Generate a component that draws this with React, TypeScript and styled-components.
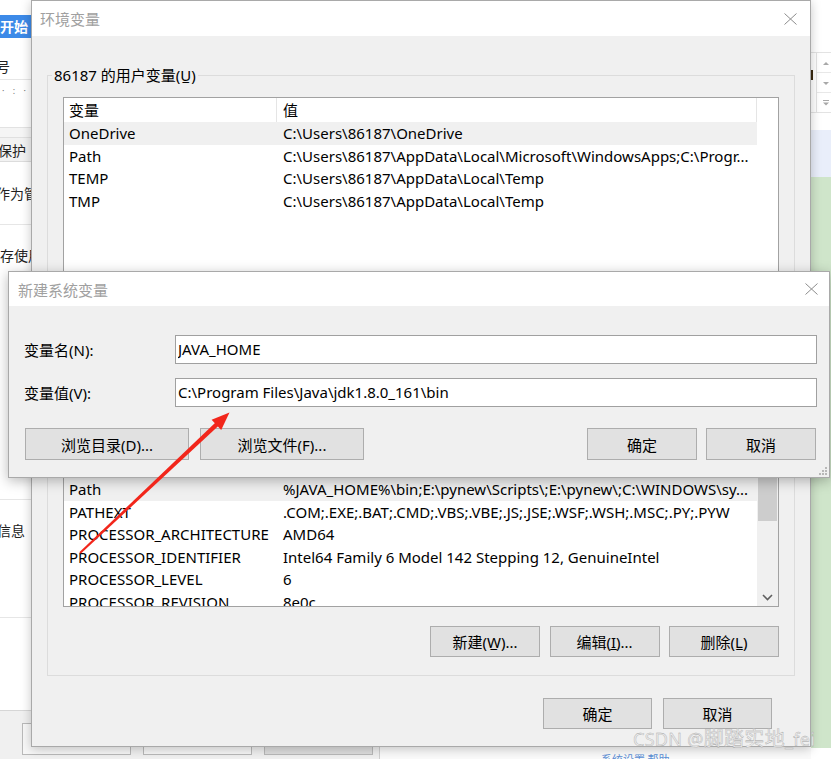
import React from "react";
import styled, { createGlobalStyle } from "styled-components";

const GlobalStyle = createGlobalStyle`
  html, body { margin: 0; padding: 0; background: #fff; }
  body {
    font-family: "Noto Sans", "Noto Sans CJK SC", sans-serif;
    font-size: 15px;
    color: #000;
    overflow: hidden;
  }
  * { box-sizing: border-box; }
`;

const Desktop = styled.div`
  position: relative;
  width: 831px;
  height: 759px;
  overflow: hidden;
  background: #fff;
`;

const Window = styled.div<{ $x: number; $y: number; $w: number; $h: number }>`
  position: absolute;
  left: ${(p) => p.$x}px;
  top: ${(p) => p.$y}px;
  width: ${(p) => p.$w}px;
  height: ${(p) => p.$h}px;
`;

/* ---------- background window on the left ---------- */
const SideWindow = styled(Window)`
  background: #fff;
  overflow: hidden;
  display: flex;
  flex-direction: column;
  font-size: 14px;
  color: #222;
`;

const SideBlock = styled.div<{ $h: number; $line?: boolean; $center?: boolean }>`
  height: ${(p) => p.$h}px;
  flex: none;
  display: flex;
  align-items: ${(p) => (p.$center ? "center" : "flex-start")};
  border-bottom: ${(p) => (p.$line ? "1px solid #e6e6e6" : "none")};
`;

const StartButton = styled.div`
  margin-top: 15px;
  margin-left: -20px;
  width: 70px;
  height: 23px;
  padding-left: 20px;
  background: #3c8ae8;
  color: #fff;
  font-weight: 700;
  font-size: 14px;
  line-height: 23px;
  font-family: "Noto Sans CJK SC", sans-serif;
`;

const SideText = styled.span<{ $shift: number }>`
  margin-left: ${(p) => p.$shift}px;
  white-space: nowrap;
  font-family: "Noto Sans CJK SC", sans-serif;
`;

const TinyMarks = styled.span`
  margin: 6px 0 0 2px;
  font-size: 9px;
  letter-spacing: 3px;
  color: #777;
  line-height: 10px;
`;

const GrayBand = styled.div`
  height: 35px;
  flex: none;
  display: flex;
  flex-direction: column;
  background: #f2f2f2;
  border-top: 1px solid #e2e2e2;
  border-bottom: 1px solid #dcdcdc;
`;

const BandTop = styled.div`
  height: 10px;
  border-bottom: 1px solid #e0e0e0;
  background: #f5f5f5;
`;

const BandRow = styled.div`
  flex: 1;
  display: flex;
  align-items: center;
`;

const SideFooter = styled.div`
  flex: 1;
  background: #f0f0f0;
  border-top: 1px solid #d6d6d6;
  display: flex;
  gap: 12px;
  padding: 12px 0 0 22px;
`;

const SideButton = styled.div<{ $filled?: boolean }>`
  width: 109px;
  height: 32px;
  border: 1px solid #b9b9b9;
  background: ${(p) => (p.$filled ? "#dedede" : "#f7f7f7")};
`;

/* ---------- background window on the right ---------- */
const RightWindow = styled(Window)`
  background: #fff;
  display: flex;
  flex-direction: column;
  overflow: hidden;
`;

const RBlock = styled.div<{ $h: number; $bg: string }>`
  height: ${(p) => p.$h}px;
  flex: none;
  background: ${(p) => p.$bg};
`;

const RToolbar = styled.div`
  height: 61px;
  flex: none;
  display: flex;
  border-top: 1px solid #e3e3e3;
  border-bottom: 1px solid #e3e3e3;
`;

const RLeft = styled.div`
  width: 6px;
  border-right: 1px solid #e3e3e3;
  padding-top: 17px;
`;

const RMark = styled.div`
  width: 2px;
  height: 10px;
  background: #3a2a10;
`;

const RArrows = styled.div`
  flex: 1;
  display: flex;
  flex-direction: column;
`;

const RArrowCell = styled.div`
  flex: 1;
  display: flex;
  align-items: center;
  padding-left: 5px;
  border-bottom: 1px solid #e8e8e8;
  &:last-child { border-bottom: none; }
`;

const RGreen = styled.div`
  flex: 1;
  background: #cfe5ca;
`;

const BottomWindow = styled(Window)`
  background: #fafafa;
  border-left: 1px solid #cfcfcf;
  overflow: hidden;
  padding: 5px 0 0 221px;
  font-size: 11px;
  color: #5b8fd6;
  line-height: 14px;
  white-space: nowrap;
  font-family: "Noto Sans CJK SC", sans-serif;
`;

/* ---------- dialogs ---------- */
const Dialog = styled(Window)`
  background: #f0f0f0;
  border: 1px solid #a9a9a9;
  display: flex;
  flex-direction: column;
`;

const MainDialog = styled(Dialog)`
  box-shadow: 0 2px 10px rgba(0, 0, 0, 0.22);
`;

const ChildDialog = styled(Dialog)`
  box-shadow: 0 3px 12px rgba(0, 0, 0, 0.28);
`;

const TitleBar = styled.div<{ $h: number; $pad: number; $closeGap: number }>`
  height: ${(p) => p.$h}px;
  flex: none;
  background: #fff;
  display: flex;
  align-items: center;
  justify-content: space-between;
  padding-left: ${(p) => p.$pad}px;
  padding-right: ${(p) => p.$closeGap}px;
`;

const TitleText = styled.span`
  font-size: 15px;
  color: #a0a0a0;
  font-family: "Noto Sans CJK SC", sans-serif;
`;

const MainBody = styled.div`
  flex: 1;
  display: flex;
  flex-direction: column;
  padding: 29px 15px 17px 15px;
`;

const GroupBox = styled.fieldset<{ $gapTop?: number; $padTop: number }>`
  margin: ${(p) => p.$gapTop ?? 0}px 0 0 0;
  padding: ${(p) => p.$padTop}px 0 18px 0;
  border: 1px solid #dcdcdc;
  min-width: 0;
`;

const GroupLegend = styled.legend`
  margin-left: 4px;
  padding: 0 2px;
  line-height: 20px;
  font-size: 15px;
`;

const GroupInner = styled.div`
  padding: 0 15px;
  display: flex;
  flex-direction: column;
`;

const ListView = styled.div<{ $h: number }>`
  height: ${(p) => p.$h}px;
  border: 1px solid #a2a2a2;
  background: #fff;
  display: flex;
  overflow: hidden;
`;

const ListMain = styled.div`
  width: 693px;
  flex: none;
  display: flex;
  flex-direction: column;
  overflow: hidden;
`;

const HeaderRow = styled.div`
  height: 24px;
  flex: none;
  display: grid;
  grid-template-columns: 213px 480px;
`;

const HeaderCell = styled.div<{ $pad: number }>`
  border-right: 1px solid #e5e5e5;
  padding-left: ${(p) => p.$pad}px;
  line-height: 24px;
  font-family: "Noto Sans CJK SC", sans-serif;
`;

const Row = styled.div<{ $selected?: boolean }>`
  height: 22.5px;
  flex: none;
  display: grid;
  grid-template-columns: 213px 480px;
  background: ${(p) => (p.$selected ? "#f0f0f0" : "transparent")};
`;

const Cell = styled.div<{ $pad: number }>`
  padding-left: ${(p) => p.$pad}px;
  line-height: 22.5px;
  white-space: nowrap;
  overflow: hidden;
`;

const ListGutter = styled.div`
  flex: 1;
`;

const ScrollBar = styled.div`
  flex: 1;
  background: #f0f0f0;
  display: flex;
  flex-direction: column;
`;

const ScrollArrow = styled.div`
  height: 17px;
  flex: none;
  display: flex;
  align-items: center;
  justify-content: center;
`;

const ScrollThumb = styled.div`
  height: 50px;
  flex: none;
  margin: 0 1px;
  background: #cdcdcd;
`;

const ScrollTrack = styled.div`
  flex: 1;
`;

const ButtonRow = styled.div<{ $top: number; $gap: number; $right?: number }>`
  display: flex;
  justify-content: flex-end;
  gap: ${(p) => p.$gap}px;
  margin-top: ${(p) => p.$top}px;
  margin-right: ${(p) => p.$right ?? 0}px;
`;

const WinButton = styled.button<{ $w: number; $h: number }>`
  width: ${(p) => p.$w}px;
  height: ${(p) => p.$h}px;
  flex: none;
  margin: 0;
  padding: 0;
  background: #e1e1e1;
  border: 1px solid #adadad;
  border-radius: 0;
  font-family: "Noto Sans", "Noto Sans CJK SC", sans-serif;
  font-size: 15px;
  color: #000;
`;

const ChildBody = styled.div`
  flex: 1;
  display: flex;
  flex-direction: column;
  padding: 29px 12px 17px 15px;
`;

const Form = styled.div`
  display: grid;
  grid-template-columns: 151px 1fr;
  row-gap: 14px;
  align-items: center;
`;

const FieldLabel = styled.label`
  font-size: 15px;
`;

const TextBox = styled.input`
  height: 29px;
  margin: 0;
  padding: 0 0 2px 2px;
  border: 1px solid #a0a0a0;
  background: #fff;
  font-family: "Noto Sans", sans-serif;
  font-size: 15px;
  color: #000;
  outline: none;
`;

const ChildButtons = styled.div`
  display: flex;
  justify-content: space-between;
  margin: 21px 1px 0 1px;
`;

const ButtonGroup = styled.div<{ $gap: number }>`
  display: flex;
  gap: ${(p) => p.$gap}px;
`;

const Grip = styled.svg`
  position: absolute;
  right: 2px;
  bottom: 2px;
`;

const Overlay = styled.svg`
  position: absolute;
  left: 0;
  top: 0;
  pointer-events: none;
`;

const Watermark = styled.div`
  position: absolute;
  left: 633px;
  top: 726px;
  font-family: "Noto Sans", "Noto Sans CJK SC", sans-serif;
  font-size: 18px;
  line-height: 26px;
  letter-spacing: 0.3px;
  white-space: nowrap;
  color: #ededed;
  -webkit-text-stroke: 0.35px #a2a2a2;
  pointer-events: none;
`;

const WaterCJK = styled.span`
  font-size: 20px;
`;

/* ---------- icons ---------- */
const CloseIcon = () => (
  <svg width="13" height="12" viewBox="0 0 13 12">
    <path d="M0.5 0.5 L12.5 11.5 M12.5 0.5 L0.5 11.5" stroke="#8c8c8c" strokeWidth="1" fill="none" />
  </svg>
);

const ChevronDown = () => (
  <svg width="11" height="7" viewBox="0 0 11 7">
    <polyline points="1,1 5.5,5.5 10,1" stroke="#5f5f5f" strokeWidth="1.6" fill="none" />
  </svg>
);

const ChevronUp = () => (
  <svg width="11" height="7" viewBox="0 0 11 7">
    <polyline points="1,6 5.5,1.5 10,6" stroke="#5f5f5f" strokeWidth="1.6" fill="none" />
  </svg>
);

const Tri = ({ up, double }: { up?: boolean; double?: boolean }) => (
  <svg width="8" height="8" viewBox="0 0 8 8">
    {up ? (
      <polygon points="1,6 4,3 7,6" fill="#a8a8a8" />
    ) : double ? (
      <>
        <rect x="1" y="1" width="6" height="1" fill="#a8a8a8" />
        <polygon points="1,3.5 7,3.5 4,6.5" fill="#a8a8a8" />
      </>
    ) : (
      <polygon points="1,3 7,3 4,6" fill="#a8a8a8" />
    )}
  </svg>
);

/* access key: the letter followed by a combining low line, kept in one text run */
const ak = (c: string) => `${c}\u0332`;

/* ---------- data ---------- */
type Var = { name: string; value: string; selected?: boolean };

const userVars: Var[] = [
  { name: "OneDrive", value: "C:\\Users\\86187\\OneDrive", selected: true },
  { name: "Path", value: "C:\\Users\\86187\\AppData\\Local\\Microsoft\\WindowsApps;C:\\Progr..." },
  { name: "TEMP", value: "C:\\Users\\86187\\AppData\\Local\\Temp" },
  { name: "TMP", value: "C:\\Users\\86187\\AppData\\Local\\Temp" },
];

const sysVars: Var[] = [
  { name: "Path", value: "%JAVA_HOME%\\bin;E:\\pynew\\Scripts\\;E:\\pynew\\;C:\\WINDOWS\\sy...", selected: true },
  { name: "PATHEXT", value: ".COM;.EXE;.BAT;.CMD;.VBS;.VBE;.JS;.JSE;.WSF;.WSH;.MSC;.PY;.PYW" },
  { name: "PROCESSOR_ARCHITECTURE", value: "AMD64" },
  { name: "PROCESSOR_IDENTIFIER", value: "Intel64 Family 6 Model 142 Stepping 12, GenuineIntel" },
  { name: "PROCESSOR_LEVEL", value: "6" },
  { name: "PROCESSOR_REVISION", value: "8e0c" },
  { name: "PSModulePath", value: "%ProgramFiles%\\WindowsPowerShell\\Modules" },
];

const VarRows = ({ vars }: { vars: Var[] }) => (
  <>
    <HeaderRow>
      <HeaderCell $pad={5}>变量</HeaderCell>
      <HeaderCell $pad={6}>值</HeaderCell>
    </HeaderRow>
    {vars.map((v, i) => (
      <Row key={i} $selected={v.selected}>
        <Cell $pad={5}>{v.name}</Cell>
        <Cell $pad={6}>{v.value}</Cell>
      </Row>
    ))}
  </>
);

export default function App() {
  const tail = { x: 80, y: 553 };
  const tip = { x: 229.5, y: 412.5 };
  const dx = tip.x - tail.x;
  const dy = tip.y - tail.y;
  const len = Math.hypot(dx, dy);
  const ux = dx / len;
  const uy = dy / len;
  const nx = -uy;
  const ny = ux;
  const headLen = 18;
  const headHalf = 7;
  const bx = tip.x - ux * headLen;
  const by = tip.y - uy * headLen;
  const pt = (x: number, y: number) => `${x.toFixed(1)},${y.toFixed(1)}`;
  const shaft = [
    pt(tail.x + nx * 1.0, tail.y + ny * 1.0),
    pt(bx + ux * 2 + nx * 2.3, by + uy * 2 + ny * 2.3),
    pt(bx + ux * 2 - nx * 2.3, by + uy * 2 - ny * 2.3),
    pt(tail.x - nx * 1.0, tail.y - ny * 1.0),
  ].join(" ");
  const head = [
    pt(tip.x, tip.y),
    pt(bx + nx * headHalf, by + ny * headHalf),
    pt(bx - nx * headHalf, by - ny * headHalf),
  ].join(" ");

  return (
    <Desktop>
      <GlobalStyle />

      <SideWindow $x={0} $y={0} $w={380} $h={759}>
        <SideBlock $h={52}>
          <StartButton>开始</StartButton>
        </SideBlock>
        <SideBlock $h={28} $line $center>
          <SideText $shift={-18}>账号</SideText>
        </SideBlock>
        <SideBlock $h={47}>
          <TinyMarks>· : ·</TinyMarks>
        </SideBlock>
        <GrayBand>
          <BandTop />
          <BandRow>
            <SideText $shift={-30}>系统保护</SideText>
          </BandRow>
        </GrayBand>
        <SideBlock $h={63} $line $center>
          <SideText $shift={-4}>作为管理员</SideText>
        </SideBlock>
        <SideBlock $h={60} $center>
          <SideText $shift={-14}>内存使用</SideText>
        </SideBlock>
        <SideBlock $h={215} $line />
        <SideBlock $h={60} $center>
          <SideText $shift={-31}>系统信息</SideText>
        </SideBlock>
        <SideBlock $h={58} $line />
        <SideBlock $h={92} />
        <SideFooter>
          <SideButton />
          <SideButton />
          <SideButton $filled />
        </SideFooter>
      </SideWindow>

      <RightWindow $x={811} $y={0} $w={20} $h={748}>
        <RBlock $h={52} $bg="#fff" />
        <RToolbar>
          <RLeft>
            <RMark />
          </RLeft>
          <RArrows>
            <RArrowCell>
              <Tri up />
            </RArrowCell>
            <RArrowCell>
              <Tri />
            </RArrowCell>
            <RArrowCell>
              <Tri double />
            </RArrowCell>
          </RArrows>
        </RToolbar>
        <RBlock $h={17} $bg="#fff" />
        <RBlock $h={47} $bg="#e9eefa" />
        <RGreen />
      </RightWindow>

      <BottomWindow $x={379} $y={747} $w={432} $h={12}>
        系统设置 帮助
      </BottomWindow>

      <MainDialog $x={31} $y={0} $w={780} $h={747}>
        <TitleBar $h={35} $pad={8} $closeGap={13}>
          <TitleText>环境变量</TitleText>
          <CloseIcon />
        </TitleBar>
        <MainBody>
          <GroupBox $padTop={12}>
            <GroupLegend>{`86187 的用户变量(${ak("U")})`}</GroupLegend>
            <GroupInner>
              <ListView $h={184}>
                <ListMain>
                  <VarRows vars={userVars} />
                </ListMain>
                <ListGutter />
              </ListView>
              <ButtonRow $top={19} $gap={9.5}>
                <WinButton $w={110} $h={31}>{`新建(${ak("N")})...`}</WinButton>
                <WinButton $w={110} $h={31}>{`编辑(${ak("E")})...`}</WinButton>
                <WinButton $w={110} $h={31}>{`删除(${ak("D")})`}</WinButton>
              </ButtonRow>
            </GroupInner>
          </GroupBox>

          <GroupBox $gapTop={60} $padTop={23}>
            <GroupLegend>{`系统变量(${ak("S")})`}</GroupLegend>
            <GroupInner>
              <ListView $h={154}>
                <ListMain>
                  <VarRows vars={sysVars} />
                </ListMain>
                <ScrollBar>
                  <ScrollArrow>
                    <ChevronUp />
                  </ScrollArrow>
                  <ScrollThumb />
                  <ScrollTrack />
                  <ScrollArrow>
                    <ChevronDown />
                  </ScrollArrow>
                </ScrollBar>
              </ListView>
              <ButtonRow $top={19} $gap={9.5}>
                <WinButton $w={110} $h={31}>{`新建(${ak("W")})...`}</WinButton>
                <WinButton $w={110} $h={31}>{`编辑(${ak("I")})...`}</WinButton>
                <WinButton $w={110} $h={31}>{`删除(${ak("L")})`}</WinButton>
              </ButtonRow>
            </GroupInner>
          </GroupBox>

          <ButtonRow $top={22} $gap={11} $right={23}>
            <WinButton $w={109} $h={31}>确定</WinButton>
            <WinButton $w={109} $h={31}>取消</WinButton>
          </ButtonRow>
        </MainBody>
      </MainDialog>

      <ChildDialog $x={8} $y={271} $w={822} $h={207}>
        <TitleBar $h={34} $pad={9} $closeGap={11}>
          <TitleText>新建系统变量</TitleText>
          <CloseIcon />
        </TitleBar>
        <ChildBody>
          <Form>
            <FieldLabel>变量名(N):</FieldLabel>
            <TextBox readOnly value="JAVA_HOME" />
            <FieldLabel>变量值(V):</FieldLabel>
            <TextBox readOnly value={"C:\\Program Files\\Java\\jdk1.8.0_161\\bin"} />
          </Form>
          <ChildButtons>
            <ButtonGroup $gap={11}>
              <WinButton $w={164} $h={32}>浏览目录(D)...</WinButton>
              <WinButton $w={164} $h={32}>浏览文件(F)...</WinButton>
            </ButtonGroup>
            <ButtonGroup $gap={9}>
              <WinButton $w={110} $h={32}>确定</WinButton>
              <WinButton $w={110} $h={32}>取消</WinButton>
            </ButtonGroup>
          </ChildButtons>
        </ChildBody>
        <Grip width="8" height="8" viewBox="0 0 8 8">
          <rect x="6" y="0" width="2" height="2" fill="#b8b8b8" />
          <rect x="3" y="3" width="2" height="2" fill="#b8b8b8" />
          <rect x="6" y="3" width="2" height="2" fill="#b8b8b8" />
          <rect x="0" y="6" width="2" height="2" fill="#b8b8b8" />
          <rect x="3" y="6" width="2" height="2" fill="#b8b8b8" />
          <rect x="6" y="6" width="2" height="2" fill="#b8b8b8" />
        </Grip>
      </ChildDialog>

      <Overlay width="831" height="759" viewBox="0 0 831 759">
        <polygon points={shaft} fill="#f2261b" />
        <polygon points={head} fill="#f2261b" />
      </Overlay>

      <Watermark>
        CSDN @<WaterCJK>脚踏实地</WaterCJK>_fei
      </Watermark>
    </Desktop>
  );
}
